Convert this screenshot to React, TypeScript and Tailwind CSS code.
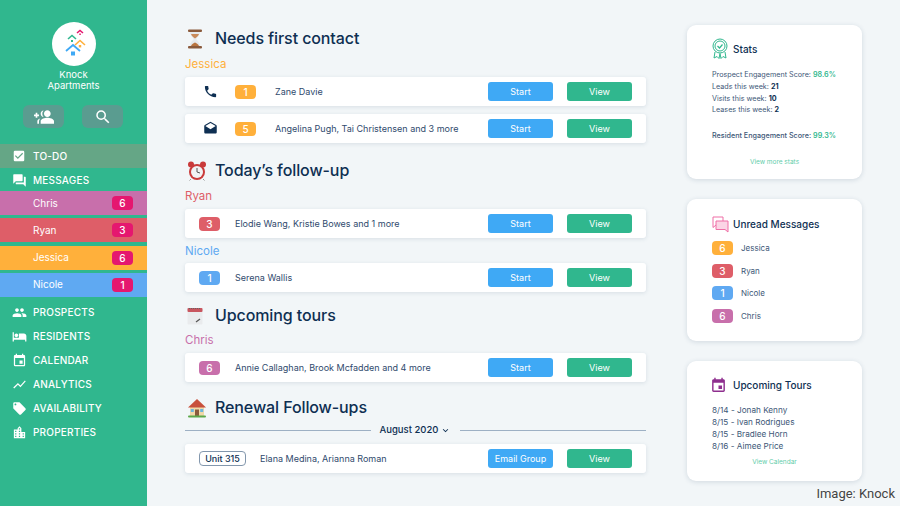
import {
  MdCheckBox,
  MdDrafts,
  MdEvent,
  MdExpandMore,
  MdForum,
  MdGroupAdd,
  MdHotel,
  MdLocalOffer,
  MdLocationCity,
  MdPeople,
  MdPhone,
  MdSearch,
  MdShowChart,
} from "react-icons/md";
import type { ReactNode } from "react";

const FONT = { fontFamily: '"Inter", "Open Sans", sans-serif' };

const NAV_BOTTOM = [
  { label: "PROSPECTS", icon: <MdPeople size={15} /> },
  { label: "RESIDENTS", icon: <MdHotel size={15} /> },
  { label: "CALENDAR", icon: <MdEvent size={15} /> },
  { label: "ANALYTICS", icon: <MdShowChart size={15} /> },
  { label: "AVAILABILITY", icon: <MdLocalOffer size={15} /> },
  { label: "PROPERTIES", icon: <MdLocationCity size={15} /> },
];

const AGENTS = [
  { name: "Chris", count: 6, bg: "bg-[#c86fab]" },
  { name: "Ryan", count: 3, bg: "bg-[#de5e68]" },
  { name: "Jessica", count: 6, bg: "bg-[#ffb03b]" },
  { name: "Nicole", count: 1, bg: "bg-[#5fa9f2]" },
];

function Logo() {
  return (
    <svg width="44" height="44" viewBox="0 0 44 44" fill="none" strokeWidth="1.6">
      <path d="M25 11l3-2.500 3 2.500" stroke="#e5176f" />
      <rect x="27.300" y="11.500" width="1.500" height="1.500" fill="#e5176f" />
      <path d="M16 17l4-3.500 4 3.500" stroke="#30b78e" />
      <rect x="19" y="18" width="2" height="2" fill="#30b78e" />
      <path d="M23 23l5-4.500 5 4.500" stroke="#ffb03b" />
      <rect x="26.800" y="23" width="2.400" height="2.400" fill="#ffb03b" />
      <path d="M14 29l7-6 7 6" stroke="#3fa9f5" strokeWidth="1.800" />
      <rect x="19" y="29.500" width="4" height="4" fill="#3fa9f5" />
    </svg>
  );
}

function NavRow({ icon, label }: { icon: ReactNode; label: string }) {
  return (
    <div className="flex items-center h-[24px] text-[10px] font-medium text-white tracking-[0.2px]">
      <span className="w-[33px] pl-[12px] flex justify-start">{icon}</span>
      {label}
    </div>
  );
}

function Sidebar() {
  return (
    <aside className="w-[147px] shrink-0 h-full bg-[#30b78e] flex flex-col">
      <div className="mt-[22px] mx-auto w-[44px] h-[44px] rounded-full bg-white">
        <Logo />
      </div>
      <div className="mt-[3px] text-center text-white text-[9.500px] leading-[11px]">
        Knock
        <br />
        Apartments
      </div>
      <div className="mt-[14px] pl-[23px] flex gap-[18px] text-white">
        <div className="w-[41px] h-[23px] rounded-[6px] bg-[#5a9c90] flex items-center justify-center">
          <MdGroupAdd size={20} className="-scale-x-100" />
        </div>
        <div className="w-[41px] h-[23px] rounded-[6px] bg-[#5a9c90] flex items-center justify-center">
          <MdSearch size={18} />
        </div>
      </div>
      <div className="mt-[16px] bg-[#65a686]">
        <NavRow icon={<MdCheckBox size={14} />} label="TO-DO" />
      </div>
      <NavRow icon={<MdForum size={15} />} label="MESSAGES" />
      <div className="flex flex-col gap-[3.300px] mt-[-1px]">
        {AGENTS.map((a) => (
          <div
            key={a.name}
            className={`${a.bg} h-[24px] flex items-center justify-between pl-[33px] pr-[14px] text-[10px] text-white`}
          >
            {a.name}
            <span className="w-[21px] h-[14px] rounded-[4px] bg-[#e5176f] text-center leading-[14px] font-medium">
              {a.count}
            </span>
          </div>
        ))}
      </div>
      <div className="mt-[4px]">
        {NAV_BOTTOM.map((n) => (
          <NavRow key={n.label} icon={n.icon} label={n.label} />
        ))}
      </div>
    </aside>
  );
}

function Hourglass() {
  return (
    <svg width="16" height="20" viewBox="0 0 16 20">
      <rect x="1" y="0.500" width="14" height="2.500" rx="1" fill="#8a5a3c" />
      <rect x="1" y="17" width="14" height="2.500" rx="1" fill="#8a5a3c" />
      <path d="M3 3h10c0 4-3.500 5.500-3.500 7s3.500 3 3.500 7H3c0-4 3.500-5.500 3.500-7S3 7 3 3z" fill="#e6e9ec" />
      <path d="M4 5h8c-.5 2-3 3.500-4 4.500C7 8.500 4.500 7 4 5z" fill="#c98a5a" />
      <path d="M4 17c.5-2 3-3 4-3.500 1 .5 3.500 1.500 4 3.500z" fill="#b9743f" />
    </svg>
  );
}

function AlarmClock() {
  return (
    <svg width="20" height="20" viewBox="0 0 20 20">
      <circle cx="4" cy="3.500" r="3" fill="#c93a3a" />
      <circle cx="16" cy="3.500" r="3" fill="#c93a3a" />
      <circle cx="10" cy="11" r="8" fill="#c93a3a" />
      <circle cx="10" cy="11" r="6" fill="#f1f2f3" />
      <path d="M10 7v4l3 1" stroke="#555" strokeWidth="1" fill="none" />
      <path d="M4 18l-1.500 1.500M16 18l1.500 1.500" stroke="#999" strokeWidth="1" />
    </svg>
  );
}

function TearOffCalendar() {
  return (
    <svg width="16" height="18" viewBox="0 0 16 18">
      <rect x="0.500" y="1" width="15" height="16.500" rx="1" fill="#e9ebed" />
      <rect x="0.500" y="1" width="15" height="4" rx="1" fill="#c8565f" />
      <path d="M2 1.500h12" stroke="#666" strokeWidth="1" strokeDasharray="1 1" />
      <path d="M9 15l4-3" stroke="#555" strokeWidth="1.200" />
    </svg>
  );
}

function House() {
  return (
    <svg width="20" height="20" viewBox="0 0 20 20">
      <rect x="3" y="8" width="14" height="10" fill="#f1d9a8" />
      <path d="M10 1L1 9.500h18z" fill="#c8503c" />
      <rect x="8" y="11.500" width="4" height="6.500" fill="#8a5a3c" />
      <rect x="3.800" y="11" width="3" height="3" fill="#6cb6dc" />
      <rect x="13.200" y="11" width="3" height="3" fill="#6cb6dc" />
      <rect x="1" y="17.500" width="18" height="2" rx="1" fill="#5ca84a" />
    </svg>
  );
}

function Heading({
  icon,
  title,
  className,
}: {
  icon: ReactNode;
  title: string;
  className: string;
}) {
  return (
    <div className={`flex items-center h-[24px] ${className}`}>
      <span className="w-[30px] pl-[2px] flex justify-start">{icon}</span>
      <h2 className="mb-[3px] text-[16px] font-medium tracking-[-0.1px] text-[#0e2f52]">{title}</h2>
    </div>
  );
}

function AgentName({ name, color, className }: { name: string; color: string; className: string }) {
  return <div className={`text-[11.500px] leading-[14px] ${color} ${className}`}>{name}</div>;
}

function Badge({ value, bg }: { value: number; bg: string }) {
  return (
    <span className={`w-[21px] h-[14px] rounded-[4px] ${bg} text-white text-[10px] leading-[14px] text-center font-medium shrink-0`}>
      {value}
    </span>
  );
}

function Row({
  children,
  action = "Start",
  className = "",
}: {
  children: ReactNode;
  action?: string;
  className?: string;
}) {
  return (
    <div className={`h-[29px] bg-white rounded-[3px] shadow-[0_1px_4px_rgba(40,70,100,0.13)] flex items-center pr-[14px] text-[9px] text-[#2f4a6d] ${className}`}>
      <div className="flex items-center flex-1 min-w-0">{children}</div>
      <button className="w-[65px] h-[19px] rounded-[3px] bg-[#3fa9f5] text-white text-[9px]">{action}</button>
      <button className="ml-[14px] w-[65px] h-[19px] rounded-[3px] bg-[#30b78e] text-white text-[9px]">View</button>
    </div>
  );
}

function MainColumn() {
  return (
    <main className="w-[461px] ml-[38px] shrink-0">
      <Heading className="mt-[27px]" icon={<Hourglass />} title="Needs first contact" />
      <AgentName className="mt-[6px]" name="Jessica" color="text-[#ffb03b]" />
      <Row className="mt-[6px]">
        <span className="w-[50px] flex justify-center text-[#0e2f52]">
          <MdPhone size={15} />
        </span>
        <Badge value={1} bg="bg-[#ffb03b]" />
        <span className="ml-[19px]">Zane Davie</span>
      </Row>
      <Row className="mt-[8px]">
        <span className="w-[50px] flex justify-center text-[#0e2f52]">
          <MdDrafts size={15} />
        </span>
        <Badge value={5} bg="bg-[#ffb03b]" />
        <span className="ml-[19px]">Angelina Pugh, Tai Christensen and 3 more</span>
      </Row>

      <Heading className="mt-[16px]" icon={<AlarmClock />} title="Today’s follow-up" />
      <AgentName className="mt-[6px]" name="Ryan" color="text-[#de5e68]" />
      <Row className="mt-[6px]">
        <span className="ml-[14px]">
          <Badge value={3} bg="bg-[#de5e68] block" />
        </span>
        <span className="ml-[15px]">Elodie Wang, Kristie Bowes and 1 more</span>
      </Row>
      <AgentName className="mt-[6px]" name="Nicole" color="text-[#5fa9f2]" />
      <Row className="mt-[5px]">
        <span className="ml-[14px]">
          <Badge value={1} bg="bg-[#5fa9f2] block" />
        </span>
        <span className="ml-[15px]">Serena Wallis</span>
      </Row>

      <Heading className="mt-[12px]" icon={<TearOffCalendar />} title="Upcoming tours" />
      <AgentName className="mt-[5px]" name="Chris" color="text-[#c86fab]" />
      <Row className="mt-[6px]">
        <span className="ml-[14px]">
          <Badge value={6} bg="bg-[#c86fab] block" />
        </span>
        <span className="ml-[15px]">Annie Callaghan, Brook Mcfadden and 4 more</span>
      </Row>

      <Heading className="mt-[14px]" icon={<House />} title="Renewal Follow-ups" />
      <div className="mt-[3px] h-[14px] flex items-center text-[9.500px] font-medium text-[#0e2f52]">
        <div className="w-[186px] h-px bg-[#9db0c4]" />
        <div className="flex-1 flex items-center justify-center">
          August 2020
          <MdExpandMore size={11} className="ml-[2px]" />
        </div>
        <div className="w-[186px] h-px bg-[#9db0c4]" />
      </div>
      <Row className="mt-[7px]" action="Email Group">
        <span className="ml-[14px] w-[47px] h-[15px] rounded-[4px] border border-[#8397ad] text-center leading-[13px] font-medium text-[#0e2f52]">
          Unit 315
        </span>
        <span className="ml-[14px]">Elana Medina, Arianna Roman</span>
      </Row>
    </main>
  );
}

function Card({ className, children }: { className: string; children: ReactNode }) {
  return (
    <section className={`w-[175px] bg-white rounded-[9px] shadow-[0_1px_5px_rgba(40,70,100,0.16)] pl-[25px] ${className}`}>
      {children}
    </section>
  );
}

function CardTitle({ icon, title }: { icon: ReactNode; title: string }) {
  return (
    <div className="flex items-center text-[10px] font-medium text-[#0e2f52]">
      <span className="w-[21px] flex justify-start">{icon}</span>
      {title}
    </div>
  );
}

function AwardIcon() {
  return (
    <svg width="16" height="22" viewBox="0 0 16 22" fill="none" stroke="#30b78e" strokeWidth="1">
      <circle cx="8" cy="8" r="7" />
      <circle cx="8" cy="8" r="5" />
      <path d="M5.500 8l2 2 3-3.500" strokeWidth="1.200" />
      <path d="M3 14l-1 6 3-1.500 2 2 1-5 1 5 2-2 3 1.500-1-6" />
    </svg>
  );
}

function ChatIcon() {
  return (
    <svg width="17" height="17" viewBox="0 0 17 17" fill="none" stroke="#ef6fa6" strokeWidth="1">
      <path d="M1 1h10v8H4l-3 2.500z" />
      <path d="M4 5H16v11l-3-2.500H4z" fill="#fbd5e5" />
    </svg>
  );
}

function RightColumn() {
  return (
    <div className="ml-[41px] shrink-0">
      <Card className="mt-[25px] h-[154px] pt-[13px]">
        <CardTitle icon={<AwardIcon />} title="Stats" />
        <div className="mt-[9px] text-[7.200px] leading-[11.800px] text-[#3d5777]">
          <div>
            Prospect Engagement Score: <span className="text-[#30b78e] font-semibold">98.6%</span>
          </div>
          <div>
            Leads this week: <b className="text-[#0e2f52]">21</b>
          </div>
          <div>
            Visits this week: <b className="text-[#0e2f52]">10</b>
          </div>
          <div>
            Leases this week: <b className="text-[#0e2f52]">2</b>
          </div>
          <div className="mt-[14px] font-medium">
            Resident Engagement Score: <span className="text-[#30b78e] font-semibold">99.3%</span>
          </div>
        </div>
        <div className="mt-[16px] pr-[25px] text-center text-[6.500px] text-[#5fcdaa]">View more stats</div>
      </Card>
      <Card className="mt-[20px] h-[142px] pt-[17px]">
        <CardTitle icon={<ChatIcon />} title="Unread Messages" />
        <div className="mt-[8px] flex flex-col gap-[8.500px] text-[8px] text-[#3d5777]">
          {[
            { n: "Jessica", c: 6, bg: "bg-[#ffb03b]" },
            { n: "Ryan", c: 3, bg: "bg-[#de5e68]" },
            { n: "Nicole", c: 1, bg: "bg-[#5fa9f2]" },
            { n: "Chris", c: 6, bg: "bg-[#c86fab]" },
          ].map((u) => (
            <div key={u.n} className="flex items-center h-[14px]">
              <Badge value={u.c} bg={u.bg} />
              <span className="ml-[8px]">{u.n}</span>
            </div>
          ))}
        </div>
      </Card>
      <Card className="mt-[20px] h-[120px] pt-[16px]">
        <CardTitle icon={<MdEvent size={17} color="#8e2e8e" className="ml-[-2px]" />} title="Upcoming Tours" />
        <div className="mt-[10px] text-[8.200px] leading-[12px] text-[#3d5777]">
          <div>8/14 - Jonah Kenny</div>
          <div>8/15 - Ivan Rodrigues</div>
          <div>8/15 - Bradlee Horn</div>
          <div>8/16 - Aimee Price</div>
        </div>
        <div className="mt-[6px] pr-[25px] text-center text-[6.500px] text-[#5fcdaa]">View Calendar</div>
      </Card>
    </div>
  );
}

export default function App() {
  return (
    <div className="relative w-[900px] h-[506px] overflow-hidden flex bg-[#f2f6f8]" style={FONT}>
      <Sidebar />
      <MainColumn />
      <RightColumn />
      <span
        className="absolute right-[5px] bottom-[3px] text-[13px] text-[#444444]"
        style={{ fontFamily: '"Roboto", sans-serif', textShadow: "0 0 2px #fff" }}
      >
        Image: Knock
      </span>
    </div>
  );
}
